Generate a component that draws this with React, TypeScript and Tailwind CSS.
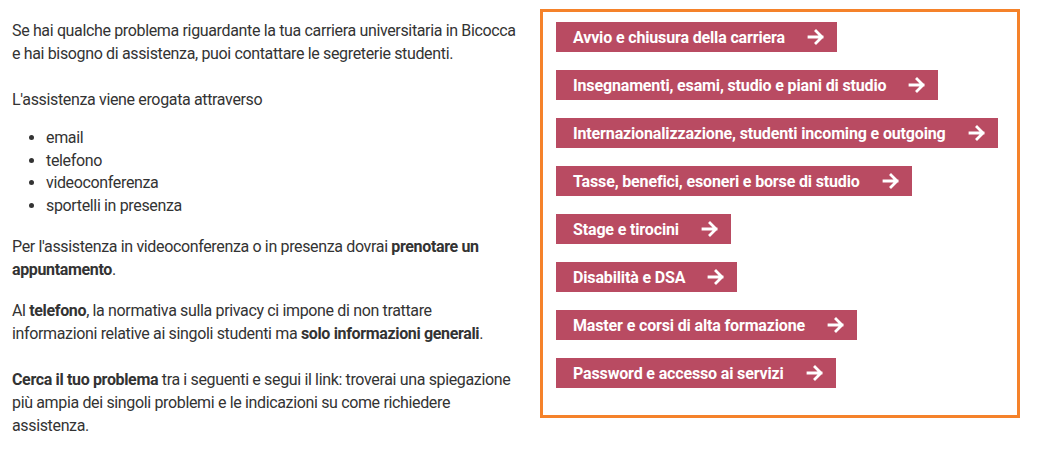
import React from "react";

const items = [
  "Avvio e chiusura della carriera",
  "Insegnamenti, esami, studio e piani di studio",
  "Internazionalizzazione, studenti incoming e outgoing",
  "Tasse, benefici, esoneri e borse di studio",
  "Stage e tirocini",
  "Disabilità e DSA",
  "Master e corsi di alta formazione",
  "Password e accesso ai servizi",
];

function Arrow() {
  return (
    <svg width="18" height="16" viewBox="0 0 18 16" fill="none" className="shrink-0">
      <path d="M2 8h13M9 2l6 6-6 6" stroke="white" strokeWidth="2.8" strokeLinecap="square" />
    </svg>
  );
}

export default function App() {
  return (
    <div className="flex w-[1040px] h-[451px] bg-white pl-[12px] text-[#333333] text-[16px] leading-[23px] font-['Roboto',sans-serif]">
      <div className="w-[524px] shrink-0 pt-[19px] tracking-[-0.35px]">
        <p>
          Se hai qualche problema riguardante la tua carriera universitaria in Bicocca
          <br />
          e hai bisogno di assistenza, puoi contattare le segreterie studenti.
        </p>
        <p className="mt-[23px]">L'assistenza viene erogata attraverso</p>
        <ul className="mt-[16px] list-disc pl-[34px] leading-[22.5px]">
          <li>email</li>
          <li>telefono</li>
          <li>videoconferenza</li>
          <li>sportelli in presenza</li>
        </ul>
        <p className="mt-[18px]">
          Per l'assistenza in videoconferenza o in presenza dovrai <b>prenotare un</b>
          <br />
          <b>appuntamento</b>.
        </p>
        <p className="mt-[18px]">
          Al <b>telefono</b>, la normativa sulla privacy ci impone di non trattare
          <br />
          informazioni relative ai singoli studenti ma <b>solo informazioni generali</b>.
        </p>
        <p className="mt-[23px]">
          <b>Cerca il tuo problema</b> tra i seguenti e segui il link: troverai una spiegazione
          <br />
          più ampia dei singoli problemi e le indicazioni su come richiedere
          <br />
          assistenza.
        </p>
      </div>
      <div className="ml-[4px] mt-[9px] w-[480px] h-[409px] border-[3px] border-[#f5822a] pl-[13px] pt-[10px] flex flex-col items-start gap-[18px] shrink-0">
        {items.map((t) => (
          <a
            key={t}
            href="#"
            className="flex items-center h-[30px] bg-[#b94b62] text-white font-bold tracking-[-0.15px] pl-[17px] pr-[12px] gap-[22px] whitespace-nowrap"
          >
            <span>{t}</span>
            <Arrow />
          </a>
        ))}
      </div>
    </div>
  );
}
